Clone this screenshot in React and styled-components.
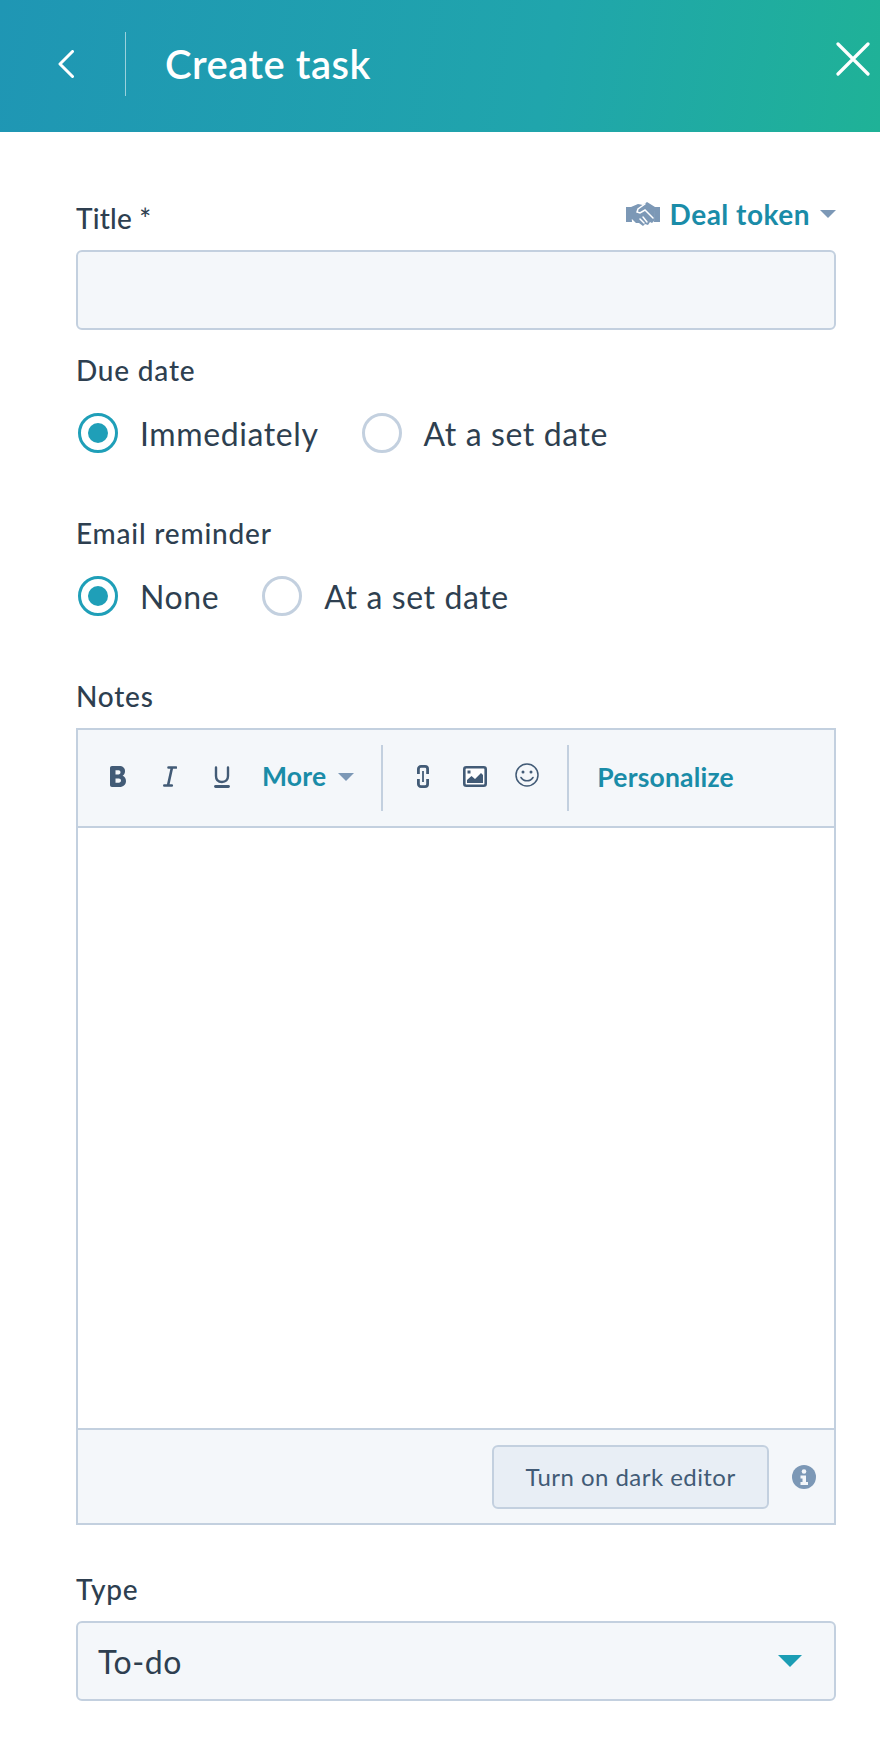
import React from 'react'
import styled, { createGlobalStyle } from 'styled-components'

const SLATE = '#425b76'
const TEAL = '#1a8ca8'
const MUTED = '#7c98b6'
const LINE = '#c3d0df'
const PANEL = '#f4f7fa'
const INK = '#2e3f50'

const Global = createGlobalStyle`
  html, body {
    margin: 0;
    padding: 0;
    background: #fff;
  }
  body {
    font-family: Lato, "Open Sans", sans-serif;
    color: ${INK};
  }
`

const Caret = ({ color = MUTED, w = 16, h = 8 }) => (
  <CaretSvg width={w} height={h} viewBox="0 0 16 8">
    <path d="M0 0h16L8 8z" fill={color} />
  </CaretSvg>
)

const Handshake = () => (
  <svg width="34" height="25" viewBox="0 0 34 25">
    <path
      fill={MUTED}
      d="M0 5h5l1 15H0zM29 5h5v15h-6zM5 5l7-3 5 1 4-3 8 5-1 14-2 2-2-1-2 3-3-1-2 2-4-3-3 0-5-5z"
    />
    <path
      fill="none"
      stroke="#fff"
      strokeWidth="1.500"
      strokeLinecap="round"
      d="M19 2l-7 5-1 3 3 1 5-3 8 8M17 15l4 5M14 17l4 4"
    />
  </svg>
)

const BoldIcon = () => (
  <svg width="16" height="21" viewBox="0 0 16 21">
    <path
      fill={SLATE}
      fillRule="evenodd"
      d="M2 0h7c4 0 6 2 6 5.200 0 2-1 3.600-2.400 4.500C14.700 10.600 16 12.400 16 15c0 3.600-2.600 6-6.500 6H2c-1.200 0-2-.8-2-2V2C0 .8.800 0 2 0zm3.500 4.200v4.300h3c1.200 0 2-.9 2-2.200s-.8-2.100-2-2.100zm0 8.300v4.300h3.300c1.300 0 2.200-.9 2.200-2.200s-.9-2.100-2.200-2.100z"
    />
  </svg>
)

const ItalicIcon = () => (
  <svg width="14" height="21" viewBox="0 0 14 21">
    <path
      fill="none"
      stroke={SLATE}
      strokeWidth="2.600"
      strokeLinecap="round"
      d="M5.500 1.500h7.500M1.300 19.500h7.500M9 1.500L5 19.500"
    />
  </svg>
)

const UnderlineIcon = () => (
  <svg width="16" height="22" viewBox="0 0 16 22">
    <path
      fill="none"
      stroke={SLATE}
      strokeWidth="2.400"
      strokeLinecap="round"
      d="M2 1.500v8.500c0 4 2.400 6 6 6s6-2 6-6V1.500"
    />
    <path fill="none" stroke={SLATE} strokeWidth="2.800" strokeLinecap="round" d="M1.500 20.500h13" />
  </svg>
)

const LinkIcon = () => (
  <svg width="12" height="23" viewBox="0 0 12 23">
    <rect x="1.400" y="1.400" width="9.200" height="20.200" rx="2.600" fill="none" stroke={SLATE} strokeWidth="2.800" />
    <rect x="0" y="9" width="3" height="5" fill={PANEL} />
    <rect x="9" y="9" width="3" height="5" fill={PANEL} />
    <path fill="none" stroke={SLATE} strokeWidth="1.800" d="M6 6v11" />
  </svg>
)

const ImageIcon = () => (
  <svg width="24" height="21" viewBox="0 0 24 21">
    <rect x="1.300" y="1.300" width="21.400" height="18.400" rx="2" fill="#fff" stroke={SLATE} strokeWidth="2.600" />
    <path fill={SLATE} d="M4 17v-3l4.500-4 3.500 3 6-6 2 2v8z" />
    <rect x="4.500" y="4.500" width="3" height="3" fill={SLATE} />
  </svg>
)

const SmileIcon = () => (
  <svg width="24" height="24" viewBox="0 0 24 24">
    <circle cx="12" cy="12" r="11" fill="none" stroke={SLATE} strokeWidth="1.500" />
    <circle cx="8" cy="9" r="1.500" fill={SLATE} />
    <circle cx="16" cy="9" r="1.500" fill={SLATE} />
    <path fill="none" stroke={SLATE} strokeWidth="1.600" strokeLinecap="round" d="M6 14.500c1.500 2.400 3.500 3.300 6 3.300s4.500-.9 6-3.300" />
  </svg>
)

const InfoIcon = () => (
  <svg width="24" height="24" viewBox="0 0 24 24">
    <circle cx="12" cy="12" r="12" fill={MUTED} />
    <circle cx="12" cy="6.500" r="2.300" fill={PANEL} />
    <path fill={PANEL} d="M8.500 10.500H14V17h2v3H8.500v-3h2v-3.500h-2z" />
  </svg>
)

const Radio = ({ checked, children }) => (
  <RadioLabel>
    <RadioDot $checked={checked} />
    {children}
  </RadioLabel>
)

export default function App() {
  return (
    <Page>
      <Global />
      <Header>
        <BackButton>
          <svg width="16" height="28" viewBox="0 0 16 28">
            <path fill="none" stroke="#fff" strokeWidth="3" strokeLinecap="round" strokeLinejoin="round" d="M14.500 1.500L2 14l12.500 12.500" />
          </svg>
        </BackButton>
        <HeaderTitle>Create task</HeaderTitle>
        <CloseButton>
          <svg width="34" height="34" viewBox="0 0 34 34">
            <path fill="none" stroke="#fff" strokeWidth="3.200" strokeLinecap="round" d="M2 2l30 30M32 2L2 32" />
          </svg>
        </CloseButton>
      </Header>

      <Form>
        <TitleRow>
          <TitleLabel>Title *</TitleLabel>
          <TokenButton>
            <Handshake />
            <TokenText>Deal token</TokenText>
            <Caret />
          </TokenButton>
        </TitleRow>
        <Input />

        <DueLabel>Due date</DueLabel>
        <RadioRow>
          <Radio checked>Immediately</Radio>
          <Radio>At a set date</Radio>
        </RadioRow>

        <ReminderLabel>Email reminder</ReminderLabel>
        <RadioRow>
          <Radio checked>None</Radio>
          <Radio>At a set date</Radio>
        </RadioRow>

        <NotesLabel>Notes</NotesLabel>
        <Editor>
          <Toolbar>
            <ToolGroup>
              <BoldIcon />
              <ToolSlot $left={37}><ItalicIcon /></ToolSlot>
              <ToolSlot $left={37}><UnderlineIcon /></ToolSlot>
              <ToolLink $left={32}>More</ToolLink>
              <ToolSlot $left={12}><Caret /></ToolSlot>
            </ToolGroup>
            <ToolDivider $left={27} />
            <ToolGroup $left={34}>
              <LinkIcon />
              <ToolSlot $left={34}><ImageIcon /></ToolSlot>
              <SmileSlot $left={28}><SmileIcon /></SmileSlot>
            </ToolGroup>
            <ToolDivider $left={28} />
            <ToolLink $left={28}>Personalize</ToolLink>
          </Toolbar>
          <EditorBody />
          <EditorFooter>
            <DarkButton>Turn on dark editor</DarkButton>
            <InfoIcon />
          </EditorFooter>
        </Editor>

        <TypeLabel>Type</TypeLabel>
        <Select>
          To-do
          <Caret color="#1b9db4" w={24} h={12} />
        </Select>
      </Form>
    </Page>
  )
}

const Page = styled.div`
  width: 880px;
  min-height: 1746px;
  background: #fff;
`
const Header = styled.header`
  display: flex;
  align-items: center;
  height: 132px;
  padding: 0 10px 4px 58px;
  box-sizing: border-box;
  background: linear-gradient(100deg, #1f96b4 0%, #20a5ac 62%, #1fb297 100%);
  color: #fff;
`
const BackButton = styled.div`
  display: flex;
  align-items: center;
  width: 67px;
  height: 64px;
  border-right: 1px solid rgba(255, 255, 255, .55);
`
const HeaderTitle = styled.h1`
  margin: 0 0 0 39px;
  font-size: 40px;
  font-weight: 600;
  letter-spacing: .5px;
  line-height: 1;
`
const CloseButton = styled.div`
  display: flex;
  margin-left: auto;
  margin-bottom: 10px;
`
const Form = styled.div`
  padding: 0 44px 0 76px;
`
const FieldLabel = styled.label`
  display: block;
  font-size: 28px;
  font-weight: 500;
  letter-spacing: .8px;
  line-height: 32px;
  color: ${INK};
`
const TitleRow = styled.div`
  display: flex;
  justify-content: space-between;
  align-items: flex-start;
  height: 50px;
  padding-top: 68px;
`
const TitleLabel = styled(FieldLabel)`
  margin-top: 2px;
  letter-spacing: .2px;
`
const TokenButton = styled.div`
  display: flex;
  align-items: center;
  height: 28px;
`
const TokenText = styled.span`
  margin: 0 10px 0 10px;
  font-size: 28px;
  font-weight: 700;
  letter-spacing: .5px;
  color: ${TEAL};
`
const CaretSvg = styled.svg`
  display: block;
  flex: none;
`
const Input = styled.div`
  height: 80px;
  box-sizing: border-box;
  border: 2px solid ${LINE};
  border-radius: 6px;
  background: ${PANEL};
`
const DueLabel = styled(FieldLabel)`
  margin-top: 24px;
`
const ReminderLabel = styled(FieldLabel)`
  margin-top: 64px;
`
const NotesLabel = styled(FieldLabel)`
  margin-top: 64px;
`
const TypeLabel = styled(FieldLabel)`
  margin-top: 48px;
`
const RadioRow = styled.div`
  display: flex;
  gap: 43px;
  margin-top: 27px;
  padding-left: 2px;
`
const RadioLabel = styled.label`
  display: flex;
  align-items: center;
  gap: 22px;
  height: 40px;
  font-size: 32px;
  letter-spacing: .6px;
  color: ${INK};
`
const RadioDot = styled.span`
  position: relative;
  display: block;
  width: 40px;
  height: 40px;
  box-sizing: border-box;
  border: 3px solid ${p => (p.$checked ? '#1f9fb8' : LINE)};
  border-radius: 50%;
  background: #fff;
  &::after {
    content: ${p => (p.$checked ? '""' : 'none')};
    position: absolute;
    top: 7px;
    left: 7px;
    width: 20px;
    height: 20px;
    border-radius: 50%;
    background: #1f9fb8;
  }
`
const Editor = styled.div`
  margin-top: 16px;
  border: 2px solid ${LINE};
`
const Toolbar = styled.div`
  display: flex;
  align-items: center;
  height: 96px;
  padding: 0 0 0 32px;
  border-bottom: 2px solid ${LINE};
  background: ${PANEL};
`
const ToolGroup = styled.div`
  display: flex;
  align-items: center;
  margin-left: ${p => p.$left || 0}px;
  margin-bottom: 3px;
`
const ToolSlot = styled.span`
  display: flex;
  margin-left: ${p => p.$left}px;
`
const SmileSlot = styled(ToolSlot)`
  margin-bottom: 4px;
`
const ToolLink = styled.span`
  margin-left: ${p => p.$left}px;
  margin-bottom: 2px;
  font-size: 26.500px;
  font-weight: 700;
  letter-spacing: .2px;
  color: ${TEAL};
`
const ToolDivider = styled.span`
  width: 2px;
  height: 66px;
  margin-left: ${p => p.$left}px;
  background: ${LINE};
`
const EditorBody = styled.div`
  height: 600px;
  background: #fff;
`
const EditorFooter = styled.div`
  display: flex;
  align-items: center;
  justify-content: flex-end;
  gap: 23px;
  height: 93px;
  padding-right: 18px;
  border-top: 2px solid ${LINE};
  background: ${PANEL};
`
const DarkButton = styled.div`
  display: flex;
  align-items: center;
  justify-content: center;
  width: 277px;
  height: 64px;
  box-sizing: border-box;
  border: 2px solid ${LINE};
  border-radius: 6px;
  background: #e8eef5;
  font-size: 24px;
  letter-spacing: .45px;
  color: ${SLATE};
`
const Select = styled.div`
  display: flex;
  align-items: center;
  justify-content: space-between;
  height: 80px;
  margin-top: 16px;
  padding: 0 32px 0 20px;
  box-sizing: border-box;
  border: 2px solid ${LINE};
  border-radius: 6px;
  background: ${PANEL};
  font-size: 32px;
  letter-spacing: .6px;
  color: ${INK};
`
